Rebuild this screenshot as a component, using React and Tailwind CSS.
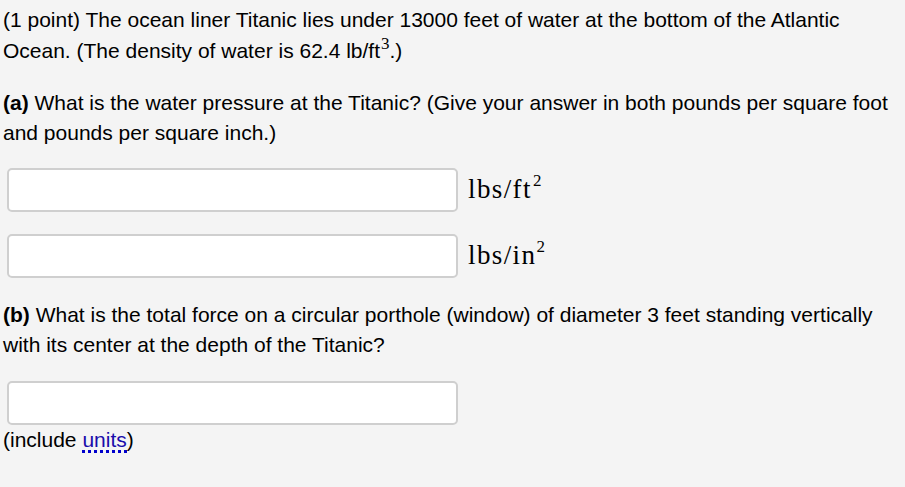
export default function App() {
  const input = "block w-[451px] h-[44px] rounded-[5px] border-2 border-[#cfcfcf] bg-white ml-[4px]";
  const serif = { fontFamily: '"Liberation Serif", "Times New Roman", serif' };
  return (
    <div className="w-[905px] h-[487px] bg-[#f4f4f4] text-black overflow-hidden" style={{ fontFamily: '"Liberation Sans", Arial, sans-serif' }}>
      <div className="pl-[3px] pr-[2px] pt-[5px] text-[21px] leading-[30px]">
        <p>(1 point) The ocean liner Titanic lies under 13000 feet of water at the bottom of the Atlantic Ocean. (The density of water is 62.4 lb/ft<span className="text-[17px] leading-none align-[9px] ml-[1px]" style={serif}>3</span>.)</p>
        <p className="mt-[22px]"><b>(a)</b> What is the water pressure at the Titanic? (Give your answer in both pounds per square foot and pounds per square inch.)</p>
        <div className="mt-[20px] flex items-center gap-[10px]">
          <div className={input} />
          <span className="text-[27px] leading-[30px] tracking-[1.4px] pb-[4px]" style={serif}>lbs/ft<span className="text-[17px] leading-none align-[12px] ml-[1px]">2</span></span>
        </div>
        <div className="mt-[22px] flex items-center gap-[10px]">
          <div className={input} />
          <span className="text-[27px] leading-[30px] tracking-[1.4px] pb-[4px]" style={serif}>lbs/in<span className="text-[17px] leading-none align-[12px]">2</span></span>
        </div>
        <p className="mt-[22px]"><b>(b)</b> What is the total force on a circular porthole (window) of diameter 3 feet standing vertically with its center at the depth of the Titanic?</p>
        <div className="mt-[21px]">
          <div className={input} />
        </div>
        <p>(include <span className="text-[#1a0dab] border-b-[3px] border-dotted border-[#0000cc] leading-[20px] inline-block">units</span>)</p>
      </div>
    </div>
  );
}
